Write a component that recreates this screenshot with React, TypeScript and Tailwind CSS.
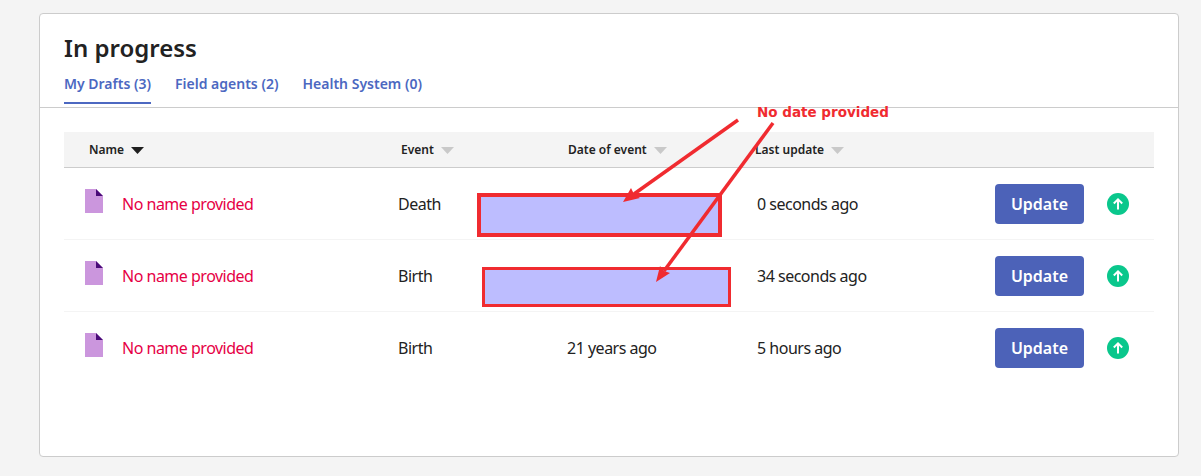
import React from 'react';

const font = { fontFamily: '"Noto Sans", sans-serif' };

const rows = [
  { event: 'Death', date: '', updated: '0 seconds ago' },
  { event: 'Birth', date: '', updated: '34 seconds ago' },
  { event: 'Birth', date: '21 years ago', updated: '5 hours ago' },
];

const Caret = ({ active }: { active?: boolean }) => (
  <svg width="13" height="7" viewBox="0 0 13 7" className="ml-[7px] mt-px">
    <path d="M0 0h13L6.5 7z" fill={active ? '#1f1f1f' : '#c9c9c9'} />
  </svg>
);

const DocIcon = () => (
  <svg width="18" height="24" viewBox="0 0 18 24" className="block">
    <path d="M0 0h11l7 7v17H0z" fill="#cb96dd" />
    <path d="M11 0l7 7h-7z" fill="#4a0a78" />
  </svg>
);

const UploadIcon = () => (
  <svg width="22" height="22" viewBox="0 0 22 22" className="block">
    <circle cx="11" cy="11" r="11" fill="#0ac78c" />
    <path d="M11 16.5V6.5M6.8 10.5l4.2-4.2 4.2 4.2" fill="none" stroke="#fff" strokeWidth="2" />
  </svg>
);

export default function App() {
  return (
    <div className="h-[476px] w-[1201px] overflow-hidden bg-[#f4f4f4] pl-[39px] pt-[13px] relative" style={font}>
      <div className="h-[444px] w-[1140px] rounded border border-[#cccccc] bg-white">
        <div className="border-b border-[#cccccc] h-[94px] px-6">
          <h1 className="pt-[17px] text-[24px] leading-[34px] font-semibold text-[#222222]">In progress</h1>
          <div className="mt-[7px] flex gap-6 text-[14px] font-semibold text-[#4c68c1]">
            <div className="h-[32px] border-b-2 border-[#4c68c1] leading-[24px]">My Drafts (3)</div>
            <div className="leading-[24px]">Field agents (2)</div>
            <div className="leading-[24px]">Health System (0)</div>
          </div>
        </div>

        <div className="mt-6 px-6">
          <div className="flex h-9 items-center border-b border-[#cccccc] bg-[#f4f4f4] text-[12px] font-semibold text-[#222222]">
            <div className="flex w-[337px] items-center pl-[25px]">Name<Caret active /></div>
            <div className="flex w-[167px] items-center">Event<Caret /></div>
            <div className="flex w-[187px] items-center">Date of event<Caret /></div>
            <div className="flex items-center">Last update<Caret /></div>
          </div>
          {rows.map((row, i) => (
            <div key={i} className="flex h-[72px] items-center border-b border-[#f4f4f4] text-[16px] tracking-[-0.5px] text-[#222222] last:border-b-0">
              <div className="flex w-[334px] items-center pl-[21px]">
                <div className="-mt-[6px] w-[37px]"><DocIcon /></div>
                <span className="text-[#e60045]">No name provided</span>
              </div>
              <div className="w-[169px]">{row.event}</div>
              <div className="w-[190px]">{row.date}</div>
              <div className="w-[238px]">{row.updated}</div>
              <button className="h-10 w-[89px] rounded bg-[#4c62b8] text-[16px] font-semibold tracking-normal text-white">Update</button>
              <div className="ml-[23px]"><UploadIcon /></div>
            </div>
          ))}
        </div>
      </div>

      {/* annotation drawn over the screenshot */}
      <div className="absolute left-[477px] top-[193px] h-[44px] w-[245px] border-[4px] border-[#f02b30] bg-[#bdbdff]" />
      <div className="absolute left-[482px] top-[267px] h-[40px] w-[249px] border-[3px] border-[#f02b30] bg-[#bdbdff]" />
      <div className="absolute left-[757px] top-[103px] text-[13.5px] leading-[18px] font-bold text-[#f02b30]" style={{ fontFamily: '"DejaVu Sans", sans-serif' }}>
        No date provided
      </div>
      <svg className="absolute left-0 top-0" width="1201" height="476" viewBox="0 0 1201 476">
        <path d="M738 120L634 194" stroke="#f02b30" strokeWidth="3.5" fill="none" />
        <path d="M623 202L631 188L634 194L640 198z" fill="#f02b30" />
        <path d="M773 123L664 271" stroke="#f02b30" strokeWidth="3.5" fill="none" />
        <path d="M656 282L660 266L664 271L670 273z" fill="#f02b30" />
      </svg>
    </div>
  );
}
